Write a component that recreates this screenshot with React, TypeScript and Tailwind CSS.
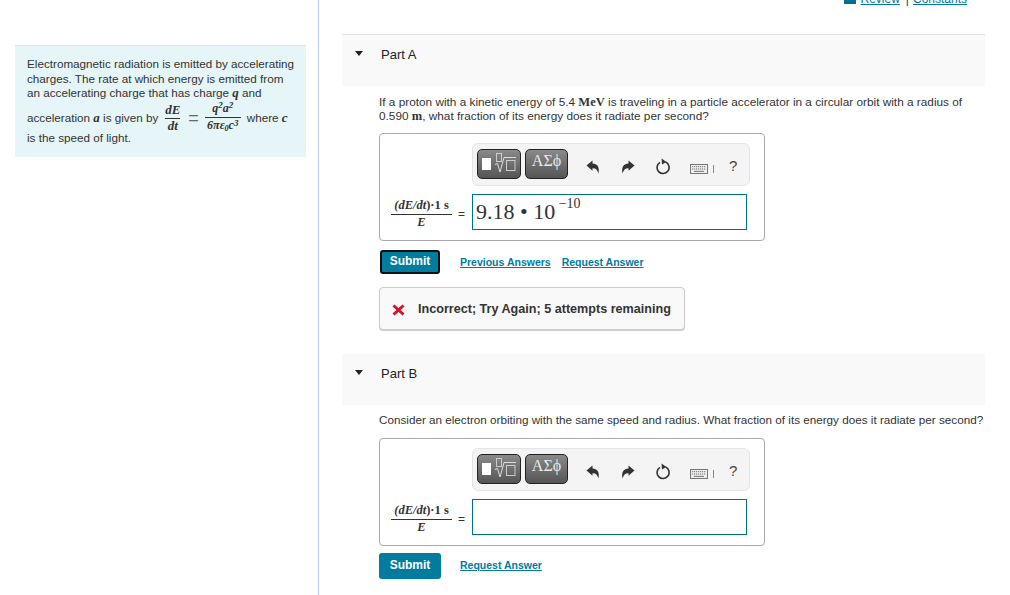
import { Fragment } from "react";

const sans = "font-['Liberation_Sans',Arial,sans-serif]";
const serif = "font-['Liberation_Serif','Times_New_Roman',serif]";

function MathVar({ children }: { children: string }) {
  return <span className={`${serif} font-bold italic text-[13px]`}>{children}</span>;
}

function Fraction({ top, bottom, className }: { top: React.ReactNode; bottom: React.ReactNode; className: string }) {
  return (
    <span className={`inline-flex flex-col items-center ${serif} font-bold text-[#333] ${className}`}>
      <span className="w-full border-b border-[#333] pb-px text-center whitespace-nowrap">{top}</span>
      <span className="whitespace-nowrap">{bottom}</span>
    </span>
  );
}

function TemplateIcon() {
  return (
    <svg width="38" height="24" viewBox="0 0 38 24" fill="none">
      <rect x="2" y="6" width="9" height="12" fill="#fff" />
      <rect x="16.5" y="1.5" width="5" height="8" stroke="#ccc" strokeWidth="1" />
      <path d="M15 12.5 L17.5 11.5 L20 20 L24 5.5 H36" stroke="#ddd" strokeWidth="1" />
      <rect x="26.5" y="8.5" width="8.5" height="10" stroke="#ccc" strokeWidth="1" />
    </svg>
  );
}

function Undo({ flip }: { flip?: boolean }) {
  return (
    <svg width="14" height="14" viewBox="0 0 14 14" className={flip ? "-scale-x-100" : ""}>
      <path d="M0.5 5.5 L6.5 0.5 V3.4 C11 3.4 14 7 12.4 13.5 C11.4 9.8 9.6 8 6.5 8.2 V10.8 Z" fill="#333" />
    </svg>
  );
}

function Reset() {
  return (
    <svg width="15" height="17" viewBox="0 0 15 17" fill="none">
      <path d="M9.6 4.1 A6 6 0 1 1 4 4.4" stroke="#333" strokeWidth="1.6" />
      <path d="M5.6 0.6 L10.4 4 L6 6.6 Z" fill="#333" />
    </svg>
  );
}

function Keyboard() {
  return (
    <svg width="18" height="10" viewBox="0 0 18 10">
      <rect x="0.5" y="0.5" width="17" height="9" fill="#eee" stroke="#777" />
      {[2, 4, 6, 8, 10, 12, 14].map((x) => (
        <Fragment key={x}>
          <rect x={x} y="2" width="1.2" height="1.2" fill="#888" />
          <rect x={x} y="4.4" width="1.2" height="1.2" fill="#888" />
        </Fragment>
      ))}
      <rect x="4" y="6.8" width="10" height="1.2" fill="#888" />
    </svg>
  );
}

function Toolbar() {
  return (
    <div className="ml-[92px] flex h-[43px] w-[278px] items-center rounded-[6px] border border-[#e4e4e4] bg-[#f4f4f4] pl-[4px]">
      <div className="mb-[2px] flex h-[30px] w-[44px] items-center justify-center rounded-[5px] border border-[#222] bg-gradient-to-b from-[#8a8a8a] to-[#555]">
        <TemplateIcon />
      </div>
      <div className={`mb-[2px] ml-[4px] flex h-[30px] w-[43px] items-start justify-center rounded-[5px] border border-[#222] bg-gradient-to-b from-[#8a8a8a] to-[#555] pt-[3px] text-[16px] leading-[16px] text-[#e8e8e8] ${serif}`}>
        ΑΣϕ
      </div>
      <div className="ml-[18px] mt-[4px] flex"><Undo /></div>
      <div className="ml-[21px] mt-[4px] flex"><Undo flip /></div>
      <div className="ml-[21px] mt-[4px] flex"><Reset /></div>
      <div className="ml-[19px] mt-[8px] flex"><Keyboard /></div>
      <div className="ml-[5px] mt-[8px] h-[8px] w-px bg-[#888]" />
      <span className={`ml-[15px] mt-[4px] text-[15px] text-[#444] ${sans}`}>?</span>
    </div>
  );
}

function AnswerBox({ children }: { children?: React.ReactNode }) {
  return (
    <div className="h-[108px] w-[386px] rounded-[4px] border border-[#aaa] pt-[9px]">
      <Toolbar />
      <div className="mt-[8px] flex items-center pl-[11px]">
        <Fraction
          className="mt-[4px] w-[61px] text-[12.5px] leading-[15px]"
          top={<><span className="italic">(dE/dt</span>)·1 s</>}
          bottom={<span className="italic">E</span>}
        />
        <span className={`ml-[6px] mt-[4px] text-[12px] text-[#333] ${sans}`}>=</span>
        <div className={`ml-[7px] flex h-[36px] w-[275px] items-start border border-[#00708f] pl-[3px] text-[#333] ${serif}`}>
          {children}
        </div>
      </div>
    </div>
  );
}

function PartHeader({ label }: { label: string }) {
  return (
    <div className={`flex h-[51px] items-start bg-[#f9f9f9] pt-[12px] pl-[13px] text-[13px] leading-[16px] text-[#222] ${sans}`}>
      <span className="mt-[4px] h-0 w-0 border-x-[4.5px] border-t-[5px] border-x-transparent border-t-[#222]" />
      <span className="ml-[18px]">{label}</span>
    </div>
  );
}

function LinkText({ children }: { children: string }) {
  return <span className="text-[10.5px] leading-[14px] font-bold text-[#007c9e] underline">{children}</span>;
}

export default function App() {
  return (
    <div className={`flex h-[595px] w-[1010px] overflow-hidden bg-white text-[#333] ${sans}`}>
      <aside className="w-[319px] shrink-0 border-r border-[#b9cde0] pl-[15px] pt-[45px]">
        <div className="h-[112px] w-[291px] border-t border-[#dde5e8] bg-[#e6f5f7] pl-[12px] pt-[11px] text-[11.7px] text-[#333]">
          <p className="leading-[14.5px]">
            Electromagnetic radiation is emitted by accelerating<br />
            charges. The rate at which energy is emitted from<br />
            an accelerating charge that has charge <MathVar>q</MathVar> and
          </p>
          <div className="flex h-[34px] items-center whitespace-nowrap">
            <span>acceleration <MathVar>a</MathVar> is given by</span>
            <Fraction className="ml-[7px] w-[15px] text-[13px] leading-[14px] italic" top="dE" bottom="dt" />
            <span className="ml-[8px] text-[18px] leading-none text-[#666]">=</span>
            <Fraction
              className="ml-[6px] w-[36px] text-[12px] leading-[14px] italic"
              top={<>q<span className="relative -top-[4px] text-[9px]">2</span>a<span className="relative -top-[4px] text-[9px]">2</span></>}
              bottom={<>6πε<span className="relative top-[2px] text-[8px]">0</span>c<span className="relative -top-[3px] text-[9px]">3</span></>}
            />
            <span className="ml-[6px]">where <MathVar>c</MathVar></span>
          </div>
          <p className="-mt-[4px] leading-[14.5px]">is the speed of light.</p>
        </div>
      </aside>
      <main className="min-w-0 flex-1 pl-[23px] pr-[25px]">
        <div className="flex h-[35px] items-start justify-end pr-[18px] -mt-[8px] text-[12px] leading-[14px]">
          <div className="flex items-center">
            <span className="mr-[2px] h-[10px] w-[12px] bg-[#00708f]" />
            <span className="px-[2px] text-[#007c9e] underline">Review</span>
            <span className="mx-[4px] text-[#333]">|</span>
            <span className="text-[#007c9e] underline">Constants</span>
          </div>
        </div>
        <div className="mt-[7px] border-t border-[#e2e2e2]">
          <PartHeader label="Part A" />
        </div>
        <div className="pl-[37px]">
          <p className="mt-[9px] text-[11.8px] leading-[14px]">
            If a proton with a kinetic energy of 5.4 <span className={`${serif} font-bold text-[12.5px]`}>MeV</span> is traveling in a particle accelerator in a circular orbit with a radius of 0.590 <span className={`${serif} font-bold text-[12.5px]`}>m</span>, what fraction of its energy does it radiate per second?
          </p>
          <div className="mt-[10px]">
            <AnswerBox>
              <span className="text-[22px] leading-[34px]">9.18 • 10</span>
              <span className="text-[14px] leading-[18px]">&nbsp;−10</span>
            </AnswerBox>
          </div>
          <div className="mt-[9px] flex items-center">
            <button className="ml-px flex h-[24px] w-[60px] items-center justify-center rounded-[3px] border-2 border-[#111] bg-[#007c9e] pb-[3px] text-[12px] font-bold text-white">Submit</button>
            <span className="ml-[20px] flex"><LinkText>Previous Answers</LinkText></span>
            <span className="ml-[11px] flex"><LinkText>Request Answer</LinkText></span>
          </div>
          <div className="mt-[13px] flex h-[43px] w-[306px] items-center rounded-[4px] border border-[#ccc] bg-[#f9f9f9] pl-[12px] pt-[2px] shadow-[0_1px_1px_rgba(0,0,0,0.2)]">
            <svg width="13" height="12" viewBox="0 0 13 12">
              <path d="M1.5 1.5 L11.5 10.5 M11.5 1.5 L1.5 10.5" stroke="#d8112a" strokeWidth="3" />
            </svg>
            <span className="ml-[13px] text-[12.6px] font-bold text-[#333]">Incorrect; Try Again; 5 attempts remaining</span>
          </div>
        </div>
        <div className="mt-[24px]">
          <PartHeader label="Part B" />
        </div>
        <div className="pl-[37px]">
          <p className="mt-[8px] whitespace-nowrap text-[11.7px] leading-[14px]">Consider an electron orbiting with the same speed and radius. What fraction of its energy does it radiate per second?</p>
          <div className="mt-[11px]">
            <AnswerBox />
          </div>
          <div className="mt-[7px] flex items-center">
            <button className="flex h-[26px] w-[62px] items-center justify-center rounded-[3px] bg-[#007c9e] pb-[3px] text-[12px] font-bold text-white">Submit</button>
            <span className="ml-[19px] flex pb-[2px]"><LinkText>Request Answer</LinkText></span>
          </div>
        </div>
      </main>
    </div>
  );
}
